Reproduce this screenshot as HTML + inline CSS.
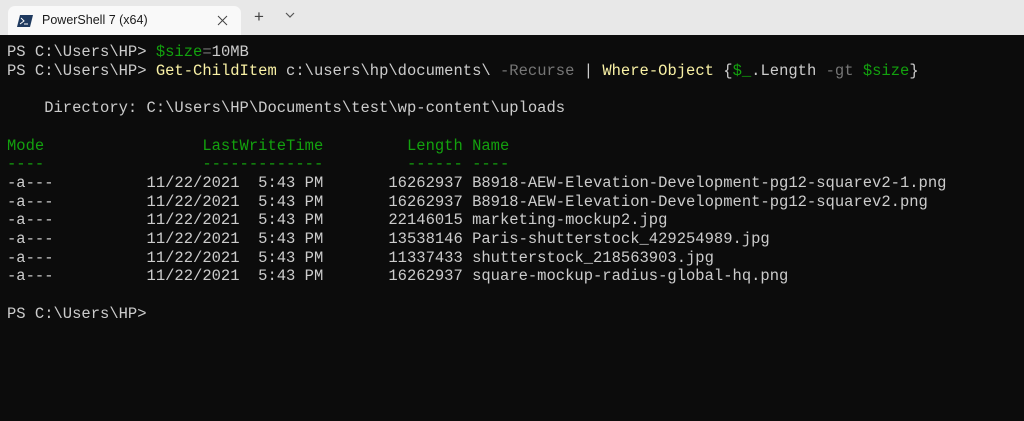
<!DOCTYPE html>
<html><head><style>
body{margin:0;width:1024px;height:421px;overflow:hidden;background:#0c0c0c;font-family:"Liberation Sans",sans-serif}
.bar{position:absolute;left:0;top:0;width:1024px;height:35px;background:#e8e8e8}
.tab{position:absolute;left:8px;top:6px;width:233px;height:29px;background:#f9f9f9;border-radius:7px 7px 0 0}
.tab .t{position:absolute;left:34px;top:7px;font-size:12.5px;color:#1a1a1a}
.plus{position:absolute;left:254px;top:7px;font-size:17px;color:#444}
.chev{position:absolute;left:284px;top:10px}
pre{position:absolute;left:7px;top:43px;margin:0;font-family:"Liberation Mono",monospace;font-size:15.5px;line-height:18.7px;color:#cccccc}
.g{color:#13a10e}.y{color:#f9f1a5}.d{color:#767676}
</style></head><body>
<div class="bar">
<div class="tab">
<svg style="position:absolute;left:9px;top:9px" width="16" height="12"><path d="M3 0 H16 L13 12 H0 Z" fill="#1f3a5f"/><path d="M4 3 L7 6 L3 9" stroke="#fff" fill="none" stroke-width="1"/><path d="M7 9 H11" stroke="#fff" stroke-width="1"/></svg>
<div class="t">PowerShell 7 (x64)</div>
<svg style="position:absolute;left:209px;top:9px" width="11" height="11"><path d="M1 1 L10 10 M10 1 L1 10" stroke="#444" stroke-width="1"/></svg>
</div>
<div class="plus">+</div>
<svg class="chev" width="12" height="10"><path d="M2 3 L6 7 L10 3" stroke="#555" fill="none" stroke-width="1.2"/></svg>
</div>
<pre>PS C:\Users\HP&gt; <span class="g">$size</span><span class="d">=</span>10MB
PS C:\Users\HP&gt; <span class="y">Get-ChildItem</span> c:\users\hp\documents\ <span class="d">-Recurse</span> | <span class="y">Where-Object</span> {<span class="g">$_</span>.Length <span class="d">-gt</span> <span class="g">$size</span>}

    Directory: C:\Users\HP\Documents\test\wp-content\uploads

<span class="g">Mode                 LastWriteTime         Length Name</span>
<span class="g">----                 -------------         ------ ----</span>
-a---          11/22/2021  5:43 PM       16262937 B8918-AEW-Elevation-Development-pg12-squarev2-1.png
-a---          11/22/2021  5:43 PM       16262937 B8918-AEW-Elevation-Development-pg12-squarev2.png
-a---          11/22/2021  5:43 PM       22146015 marketing-mockup2.jpg
-a---          11/22/2021  5:43 PM       13538146 Paris-shutterstock_429254989.jpg
-a---          11/22/2021  5:43 PM       11337433 shutterstock_218563903.jpg
-a---          11/22/2021  5:43 PM       16262937 square-mockup-radius-global-hq.png

PS C:\Users\HP&gt;</pre>
</body></html>
